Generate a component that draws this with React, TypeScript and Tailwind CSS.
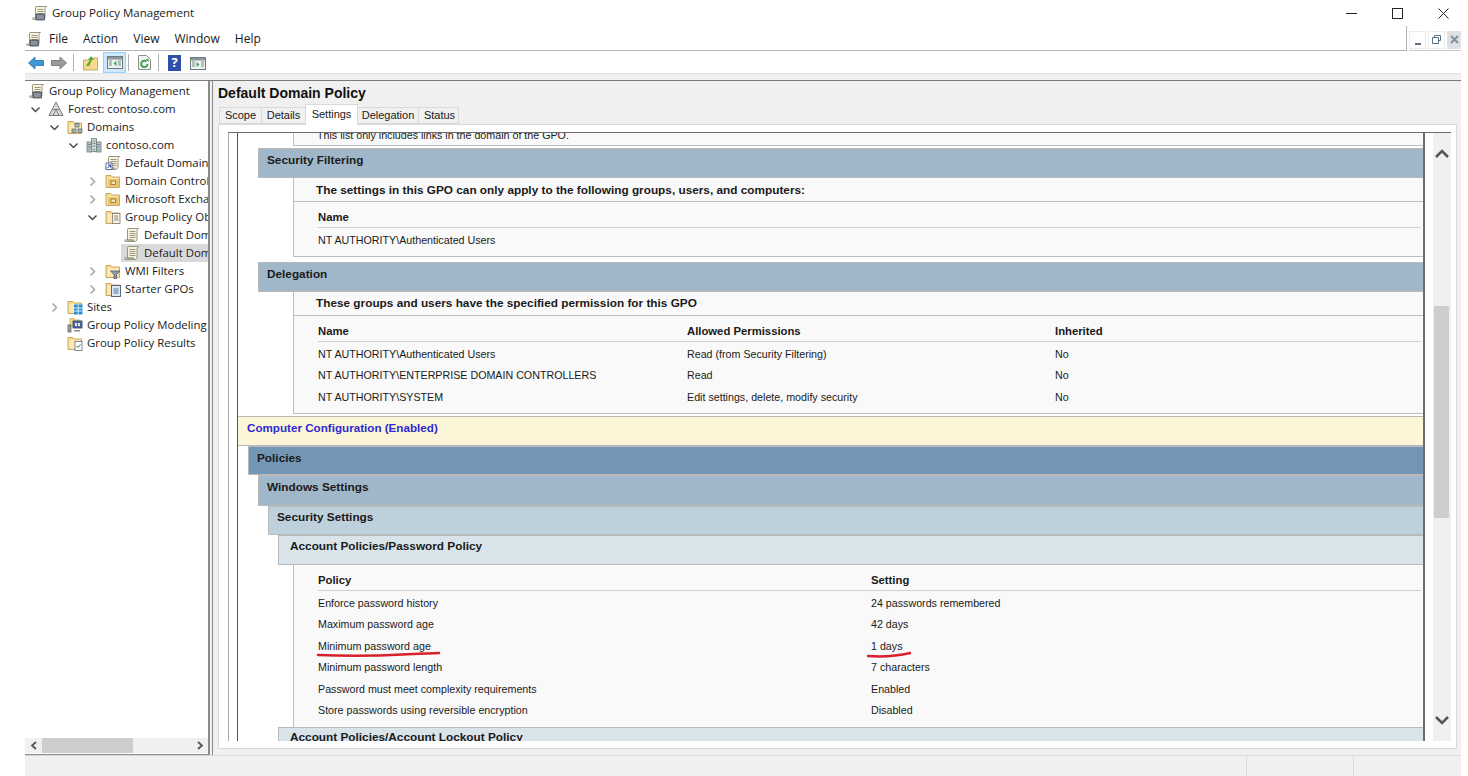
import React from "react";

const ui = "font-['Open_Sans','Noto_Sans',sans-serif]";

function Scroll({ shield, box }: { shield?: boolean; box?: boolean }) {
  return (
    <svg width="16" height="16" viewBox="0 0 16 16" className="shrink-0">
      <path d="M4 1.500h10.500c-.8.5-1.500 1.500-1.500 3V12c0 1.500-1 2.500-2 2.500H2c-.9 0-1.500-.7-1.500-1.500h8c0 .6.400 1 .9 1s.6-.4.6-1H3.500V3c0-.8.200-1.500.5-1.500z" fill="#f7f3de" stroke="#8d8a76" strokeWidth="0.9" />
      <path d="M5.500 4.500h6M5.500 6.500h6M5.500 8.500h6M5.500 10.500h6" stroke="#8d8a76" strokeWidth="0.9" />
      {shield && (
        <>
          <path d="M1 8h6v6.500H1z" fill="#fff" stroke="#4a5a8c" strokeWidth="0.9" />
          <path d="M2.500 13l3-3M3 10h2.500v2.500" fill="none" stroke="#2a3f9c" strokeWidth="1" />
        </>
      )}
      {box && (
        <>
          <path d="M4 9h8.500v6H4z" fill="#6f7683" stroke="#4a505c" strokeWidth="0.8" />
          <path d="M5 11h6.500M5 13h6.500" stroke="#b9bec6" strokeWidth="0.8" />
        </>
      )}
    </svg>
  );
}

function Folder({ kind }: { kind?: "doc" | "ou" | "filter" | "starter" | "sites" | "domains" | "results" }) {
  return (
    <svg width="16" height="16" viewBox="0 0 16 16" className="shrink-0">
      <path d="M1 2.500h5l1.500 1.500h7V14.500H1z" fill="#f7dc8f" stroke="#c1a25a" strokeWidth="0.9" />
      <path d="M2.500 5h11v8.500h-11z" fill="#fbeab8" />
      {kind === "ou" && (
        <>
          <rect x="3" y="6" width="11" height="8" fill="#e9c66f" />
          <rect x="6" y="8" width="4.500" height="3.500" fill="#f7e7b4" stroke="#8c6d2c" strokeWidth="0.8" />
        </>
      )}
      {kind === "doc" && (
        <>
          <rect x="7.500" y="4.500" width="7.500" height="10" fill="#f8f5e7" stroke="#7d7a68" strokeWidth="0.8" />
          <path d="M9 7h4.500M9 9h4.500M9 11h4.500" stroke="#77756a" strokeWidth="0.8" />
        </>
      )}
      {kind === "filter" && <path d="M5.500 8h9.500l-3.500 3.500V15.500h-2.500v-4z" fill="#8d9aa8" stroke="#4f5965" strokeWidth="0.8" />}
      {kind === "starter" && (
        <>
          <rect x="6.500" y="4.500" width="9" height="11" fill="#dfe7f2" stroke="#4c5a6d" strokeWidth="0.9" />
          <path d="M8.500 8h5M8.500 10h5M8.500 12h5" stroke="#3f6ea8" strokeWidth="0.9" />
        </>
      )}
      {kind === "sites" && (
        <>
          <rect x="7" y="5.500" width="8.500" height="10" fill="#2f8fd0" />
          <path d="M7 9h8.500M7 12h8.500M11.200 5.500v10" stroke="#fff" strokeWidth="0.8" />
        </>
      )}
      {kind === "domains" && (
        <>
          <rect x="8" y="4.500" width="4" height="3.500" fill="#aab3bb" stroke="#59636c" strokeWidth="0.7" />
          <rect x="5" y="10" width="4" height="3.500" fill="#aab3bb" stroke="#59636c" strokeWidth="0.7" />
          <rect x="11" y="10" width="4" height="3.500" fill="#aab3bb" stroke="#59636c" strokeWidth="0.7" />
        </>
      )}
      {kind === "results" && (
        <>
          <rect x="8" y="6.500" width="7" height="9" fill="#fff" stroke="#5f6a78" strokeWidth="0.8" />
          <path d="M9.500 11l1.500 1.500 2.500-3" stroke="#2f7d3a" strokeWidth="1" fill="none" />
        </>
      )}
    </svg>
  );
}

function Forest() {
  return (
    <svg width="16" height="16" viewBox="0 0 16 16" className="shrink-0">
      <path d="M8 1l7 13.500H1z" fill="#d8d8d8" stroke="#6e6e6e" strokeWidth="0.9" />
      <path d="M5 8.500h6M8 8.500l-3 6M8 8.500l3 6" stroke="#6e6e6e" strokeWidth="0.8" fill="none" />
    </svg>
  );
}

function Server() {
  return (
    <svg width="16" height="16" viewBox="0 0 16 16" className="shrink-0">
      <rect x="1" y="5" width="5" height="10" fill="#b8c2c6" stroke="#6d7a7e" strokeWidth="0.8" />
      <rect x="10" y="5" width="5" height="10" fill="#b8c2c6" stroke="#6d7a7e" strokeWidth="0.8" />
      <rect x="5.500" y="1.500" width="5" height="13" fill="#cfd7da" stroke="#6d7a7e" strokeWidth="0.8" />
      <path d="M2 7.500h3M2 10h3M11 7.500h3M11 10h3M6.500 4h3M6.500 6.500h3M6.500 9h3" stroke="#5d6a6e" strokeWidth="0.7" />
      <path d="M2.500 13h1.500M7 12.500h2M11.500 13h1.500" stroke="#35b34a" strokeWidth="1.200" />
    </svg>
  );
}

function Modeling() {
  return (
    <svg width="16" height="16" viewBox="0 0 16 16" className="shrink-0">
      <path d="M3 1.500h4l1 1.500h5V9H3z" fill="#f7dc8f" stroke="#c1a25a" strokeWidth="0.8" />
      <rect x="6" y="4" width="9" height="7" fill="#4d6aa8" stroke="#39435c" strokeWidth="0.8" />
      <path d="M8 6h2v3H8zM11 6h2v3h-2z" fill="#dfe7f2" />
      <rect x="1" y="8" width="3" height="7" fill="#9aa2a8" stroke="#555" strokeWidth="0.7" />
      <path d="M7 13h6v1.500H7z" fill="#8a9096" />
    </svg>
  );
}

function Chev({ open }: { open?: boolean }) {
  return (
    <svg width="11" height="11" viewBox="0 0 11 11" className="shrink-0">
      {open ? (
        <path d="M1.500 3.500l4 4 4-4" fill="none" stroke="#4a4a4a" strokeWidth="1.500" />
      ) : (
        <path d="M3.500 1.500l4 4-4 4" fill="none" stroke="#a6a6a6" strokeWidth="1.500" />
      )}
    </svg>
  );
}

function TreeRow({ pad, chev, icon, label, selected, root }: { pad: string; chev?: "open" | "closed"; icon: React.ReactNode; label: string; selected?: boolean; root?: boolean }) {
  return (
    <div className={`flex h-[18px] items-center whitespace-nowrap ${pad}`}>
      {!root && <span className="flex w-[19px] shrink-0 items-center pl-[1px]">{chev && <Chev open={chev === "open"} />}</span>}
      <span className={`-ml-[3px] flex h-[18px] flex-1 items-center gap-[4px] pl-[3px] ${selected ? "bg-[#d9d9d9]" : ""}`}>
        {icon}
        <span>{label}</span>
      </span>
    </div>
  );
}

function Bar({ indent, bg, box, label }: { indent: string; bg: string; box: string; label: string }) {
  return (
    <div className={`border border-r-0 border-[#b9b9b9] text-[11.800px] font-bold ${indent} ${bg} ${box}`}>
      {label}
    </div>
  );
}

function Underline({ d, cls }: { d: string; cls: string }) {
  return (
    <svg viewBox="0 0 130 8" className={`pointer-events-none absolute top-[12px] h-[8px] ${cls}`} preserveAspectRatio="none">
      <path d={d} fill="none" stroke="#d8202c" strokeWidth="2.400" strokeLinecap="round" vectorEffect="non-scaling-stroke" />
    </svg>
  );
}

function ColHead({ children, cols }: { children: React.ReactNode; cols: string }) {
  return <div className={`grid h-[23px] border-b border-b-[#cfcfcf] pt-[5px] text-[11.300px] font-bold ${cols}`}>{children}</div>;
}

function Row({ cols, cells }: { cols: string; cells: React.ReactNode[] }) {
  return (
    <div className={`grid h-[21.500px] items-center pt-[2px] ${cols}`}>
      {cells.map((c, i) => (
        <div key={i}>{c}</div>
      ))}
    </div>
  );
}

export default function App() {
  const tree = (
    <>
      <TreeRow root pad="pl-[4px]" icon={<Scroll box />} label="Group Policy Management" />
      <TreeRow pad="pl-[4px]" chev="open" icon={<Forest />} label="Forest: contoso.com" />
      <TreeRow pad="pl-[23px]" chev="open" icon={<Folder kind="domains" />} label="Domains" />
      <TreeRow pad="pl-[42px]" chev="open" icon={<Server />} label="contoso.com" />
      <TreeRow pad="pl-[61px]" icon={<Scroll shield />} label="Default Domain Policy" />
      <TreeRow pad="pl-[61px]" chev="closed" icon={<Folder kind="ou" />} label="Domain Controllers" />
      <TreeRow pad="pl-[61px]" chev="closed" icon={<Folder kind="ou" />} label="Microsoft Exchange" />
      <TreeRow pad="pl-[61px]" chev="open" icon={<Folder kind="doc" />} label="Group Policy Objects" />
      <TreeRow pad="pl-[80px]" icon={<Scroll />} label="Default Domain Controllers" />
      <TreeRow pad="pl-[80px]" icon={<Scroll />} label="Default Domain Policy" selected />
      <TreeRow pad="pl-[61px]" chev="closed" icon={<Folder kind="filter" />} label="WMI Filters" />
      <TreeRow pad="pl-[61px]" chev="closed" icon={<Folder kind="starter" />} label="Starter GPOs" />
      <TreeRow pad="pl-[23px]" chev="closed" icon={<Folder kind="sites" />} label="Sites" />
      <TreeRow pad="pl-[23px]" icon={<Modeling />} label="Group Policy Modeling" />
      <TreeRow pad="pl-[23px]" icon={<Folder kind="results" />} label="Group Policy Results" />
    </>
  );

  const c3 = "grid-cols-[369px_368px_1fr]";
  const c2 = "grid-cols-[553px_1fr]";
  const box = "ml-[55px] border-r border-l border-[#bdbdbd] bg-[#f9f9f9]";
  const head = "border-b border-b-[#bdbdbd] pl-[22px] text-[11.800px] font-bold";
  const inner = "mr-[2px] ml-[24px] pt-[3px]";

  return (
    <div className={`flex h-[776px] w-[1468px] overflow-hidden bg-white text-[11.400px] text-[#1a1a1a] ${ui}`}>
      <div className="ml-[25px] flex w-[1436px] flex-col">
        {/* Title bar */}
        <div className="flex h-[26px] items-center">
          <span className="ml-[7px]"><Scroll box /></span>
          <span className="ml-[4px] text-[11.500px]">Group Policy Management</span>
          <div className="ml-auto flex items-center">
            <svg width="11" height="11" viewBox="0 0 11 11"><path d="M0 5.500h11" stroke="#222" /></svg>
            <svg width="11" height="11" viewBox="0 0 11 11" className="ml-[35px]"><rect x="0.500" y="0.500" width="10" height="10" fill="none" stroke="#222" /></svg>
            <svg width="11" height="11" viewBox="0 0 11 11" className="mr-[12px] ml-[35px]"><path d="M0.500 0.500l10 10M10.500 0.500l-10 10" stroke="#222" /></svg>
          </div>
        </div>
        {/* Menu bar */}
        <div className="flex h-[25px] items-stretch">
          <div className="flex flex-1 items-center border-r border-b border-r-[#b4b4b4] border-b-[#b4b4b4] pt-[2px] text-[12px]">
            <span className="ml-[1px]"><Scroll box /></span>
            <span className="ml-[7px]">File</span>
            <span className="ml-[15px]">Action</span>
            <span className="ml-[15px]">View</span>
            <span className="ml-[15px]">Window</span>
            <span className="ml-[15px]">Help</span>
          </div>
          <div className="ml-[2px] flex items-center gap-[2px] border-b border-b-[#c8c8c8] pt-[3px]">
            <span className="flex h-[18px] w-[17px] items-end justify-center border border-[#ececec] pb-[3px]"><span className="h-[2px] w-[6px] bg-[#5f7083]" /></span>
            <span className="flex h-[18px] w-[17px] items-center justify-center border border-[#ececec]">
              <svg width="9" height="9" viewBox="0 0 9 9"><path d="M2.500 2.500V.5h6v5h-2M.5 2.500h6v6h-6z" fill="none" stroke="#5f7083" /></svg>
            </span>
            <span className="flex h-[18px] w-[14px] items-center justify-center bg-[#dfe1e4]">
              <svg width="9" height="9" viewBox="0 0 9 9"><path d="M1 1l7 7M8 1l-7 7" stroke="#7f8ea0" strokeWidth="2" /></svg>
            </span>
          </div>
        </div>
        {/* Toolbar */}
        <div className="flex h-[23px] items-center border-b border-b-[#e3e3e3] pl-[3px]">
          <svg width="16" height="14" viewBox="0 0 16 14" className="mt-[2px]"><path d="M.5 7L7 1v3.500h8.500v5H7V13z" fill="#3f97d9" stroke="#2a6ea5" strokeWidth="0.8" /></svg>
          <svg width="16" height="14" viewBox="0 0 16 14" className="mt-[2px] ml-[7px]"><path d="M15.500 7L9 1v3.500H.5v5H9V13z" fill="#9a9a9a" stroke="#6b6b6b" strokeWidth="0.8" /></svg>
          <span className="ml-[6px] h-[17px] w-px bg-[#b0b0b0]" />
          <svg width="15" height="16" viewBox="0 0 15 16" className="mt-[1px] ml-[9px]">
            <path d="M.5 5h6l1-2h7v12H.5z" fill="#f6d98c" stroke="#b69a55" strokeWidth="0.8" />
            <path d="M3 11l4-6-2 0 3-4 3 4-2 0-3 6z" fill="#5aa83a" />
          </svg>
          <span className="ml-[5px] flex h-[21px] w-[23px] items-center justify-center border border-[#99d1ff] bg-[#cce8ff]">
            <svg width="16" height="13" viewBox="0 0 16 13">
              <rect x="0.500" y="0.500" width="15" height="12" fill="#eef2ee" stroke="#6d7a7e" />
              <path d="M1 1h14v2.500H1z" fill="#8b979b" />
              <path d="M2 5h3M2 7h3M2 9h3M11 5h3M11 7h3M11 9h3" stroke="#7a8a8e" />
              <path d="M9.500 5v5L6.500 7.500z" fill="#33a852" />
            </svg>
          </span>
          <span className="ml-[2px] h-[17px] w-px bg-[#b0b0b0]" />
          <svg width="13" height="15" viewBox="0 0 13 15" className="mt-[1px] ml-[9px]">
            <path d="M.5.5h8l4 4v10H.5z" fill="#f3f3f3" stroke="#8f8f8f" />
            <path d="M9.500 9a3.200 3.200 0 1 1-1-2.400" fill="none" stroke="#2ca04a" strokeWidth="1.800" />
            <path d="M8 4l2.500 0 0 3z" fill="#2ca04a" />
          </svg>
          <span className="ml-[7px] h-[17px] w-px bg-[#b0b0b0]" />
          <span className="mt-[1px] ml-[9px] flex h-[16px] w-[13px] items-center justify-center bg-[#2f4fa8] text-[13px] leading-none font-bold text-white">?</span>
          <svg width="16" height="13" viewBox="0 0 16 13" className="mt-[2px] ml-[9px]">
            <rect x="0.500" y="0.500" width="15" height="12" fill="#eef2ee" stroke="#6d7a7e" />
            <path d="M1 1h14v2.500H1z" fill="#8b979b" />
            <path d="M2 5h3M2 7h3M2 9h3M11 5h3M11 7h3M11 9h3" stroke="#7a8a8e" />
            <path d="M6.500 5v5l3-2.500z" fill="#33a852" />
          </svg>
        </div>
        <div className="h-[6px] bg-[#f0f0f0]" />
        {/* Body */}
        <div className="flex h-[675px] border-t border-t-[#7a7a7a] bg-[#f0f0f0]">
          {/* Tree pane */}
          <div className="flex w-[185px] flex-col border-r-2 border-r-[#8c8c8c] bg-white">
            <div className="h-[1px]" />
            <div className="min-h-0 w-[183px] flex-1 overflow-hidden">{tree}</div>
            <div className="mb-[1px] flex h-[15px] w-[183px] items-center bg-[#f0f0f0]">
              <span className="flex w-[17px] justify-center">
                <svg width="8" height="9" viewBox="0 0 8 9"><path d="M6 1L2 4.500 6 8" fill="none" stroke="#555" strokeWidth="1.800" /></svg>
              </span>
              <span className="h-[15px] w-[91px] bg-[#cdcdcd]" />
              <span className="ml-auto flex w-[17px] justify-center">
                <svg width="8" height="9" viewBox="0 0 8 9"><path d="M2 1l4 3.500L2 8" fill="none" stroke="#555" strokeWidth="1.800" /></svg>
              </span>
            </div>
            <div className="h-[1px] bg-[#8c8c8c]" />
          </div>
          {/* Right pane */}
          <div className="ml-[2px] flex flex-1 flex-col border-l border-l-[#8c8c8c]">
            <div className="flex h-[25px] items-end pb-[4px] pl-[5px] font-['Liberation_Sans',sans-serif] text-[14px] leading-[18px] font-bold text-[#111]">
              Default Domain Policy
            </div>
            {/* Tabs */}
            <div className="flex h-[18px] items-end pl-[6px] font-['Liberation_Sans',sans-serif] text-[11px]">
              <span className="flex h-[17px] w-[42px] items-center justify-center border border-r-0 border-[#d9d9d9] bg-[#f0f0f0]">Scope</span>
              <span className="flex h-[17px] w-[44px] items-center justify-center border border-r-0 border-[#d9d9d9] bg-[#f0f0f0]">Details</span>
              <span className="z-10 -mb-[1px] flex h-[21px] w-[53px] items-center justify-center border border-b-0 border-[#d9d9d9] bg-white pb-[2px]">Settings</span>
              <span className="flex h-[17px] w-[60px] items-center justify-center border border-x-0 border-[#d9d9d9] bg-[#f0f0f0]">Delegation</span>
              <span className="flex h-[17px] w-[41px] items-center justify-center border border-[#d9d9d9] bg-[#f0f0f0] pl-[2px]">Status</span>
            </div>
            {/* Tab page */}
            <div className="ml-[5px] flex h-[625px] w-[1239px] flex-col border border-[#d9d9d9] bg-white pt-[7px] pl-[9px]">
              <div className="flex h-[609px] w-[1223px] flex-col border-t border-t-[#6d6d6d]">
                <div className="flex min-h-0 flex-1">
                  {/* Report */}
                  <div className="w-[1197px] shrink-0 overflow-hidden border-r-2 border-l border-r-[#6d6d6d] border-l-[#a8a8a8] pl-[8px]">
                    <div className="h-full overflow-hidden border-l border-l-[#555] font-['Liberation_Sans',sans-serif] text-[10.700px] leading-[14px] text-[#1a1a1a]">
                      <div className="-mt-[9px] w-[1186px]">
                        <div className={`${box} flex h-[22px] items-end border-b border-b-[#bdbdbd] pb-[3px] pl-[23px]`}>This list only includes links in the domain of the GPO.</div>
                        <div className="h-[2px]" />
                        <Bar indent="ml-[20px]" bg="bg-[#a0b7ca]" box="h-[30px] pt-[4px] pl-[8px]" label="Security Filtering" />
                        <div className={`${box} h-[79px] border-b`}>
                          <div className={`${head} h-[24px] pt-[5px]`}>The settings in this GPO can only apply to the following groups, users, and computers:</div>
                          <div className={inner}>
                            <ColHead cols="grid-cols-1"><div>Name</div></ColHead>
                            <Row cols="grid-cols-1" cells={["NT AUTHORITY\\Authenticated Users"]} />
                          </div>
                        </div>
                        <div className="h-[5px]" />
                        <Bar indent="ml-[20px]" bg="bg-[#a0b7ca]" box="h-[30px] pt-[4px] pl-[8px]" label="Delegation" />
                        <div className={`${box} h-[122px] border-b`}>
                          <div className={`${head} h-[24px] pt-[4px]`}>These groups and users have the specified permission for this GPO</div>
                          <div className={inner}>
                            <ColHead cols={c3}><div>Name</div><div>Allowed Permissions</div><div>Inherited</div></ColHead>
                            <Row cols={c3} cells={["NT AUTHORITY\\Authenticated Users", "Read (from Security Filtering)", "No"]} />
                            <Row cols={c3} cells={["NT AUTHORITY\\ENTERPRISE DOMAIN CONTROLLERS", "Read", "No"]} />
                            <Row cols={c3} cells={["NT AUTHORITY\\SYSTEM", "Edit settings, delete, modify security", "No"]} />
                          </div>
                        </div>
                        <div className="h-[2px]" />
                        <div className="h-[30px] border-y border-[#b9b9b9] bg-[#fdf5d8] pt-[4px] pl-[9px] text-[11.650px] font-bold text-[#2a2ad0]">Computer Configuration (Enabled)</div>
                        <Bar indent="ml-[10px]" bg="bg-[#7296b4]" box="h-[29px] pt-[4px] pl-[8px]" label="Policies" />
                        <Bar indent="ml-[20px]" bg="bg-[#a0b7ca]" box="h-[31px] pt-[4px] pl-[8px]" label="Windows Settings" />
                        <Bar indent="ml-[30px]" bg="bg-[#bfd0dd]" box="h-[29px] pt-[3px] pl-[8px]" label="Security Settings" />
                        <Bar indent="ml-[40px]" bg="bg-[#d9e3ea]" box="h-[30px] pt-[3px] pl-[11px]" label="Account Policies/Password Policy" />
                        <div className={`${box} h-[162px]`}>
                          <div className={inner}>
                            <ColHead cols={c2}><div>Policy</div><div>Setting</div></ColHead>
                            <Row cols={c2} cells={["Enforce password history", "24 passwords remembered"]} />
                            <Row cols={c2} cells={["Maximum password age", "42 days"]} />
                            <Row
                              cols={c2}
                              cells={[
                                <span className="relative inline-block">Minimum password age<Underline cls="-left-[2px] w-[125px]" d="M2 4C30 5 60 5 90 3.500 108 2.500 122 2.500 128 2" /></span>,
                                <span className="relative inline-block">1 days<Underline cls="-left-[4px] w-[44px]" d="M2 5C40 6 90 5 128 2" /></span>,
                              ]}
                            />
                            <Row cols={c2} cells={["Minimum password length", "7 characters"]} />
                            <Row cols={c2} cells={["Password must meet complexity requirements", "Enabled"]} />
                            <Row cols={c2} cells={["Store passwords using reversible encryption", "Disabled"]} />
                          </div>
                        </div>
                        <div className="ml-[40px] h-[30px] border border-r-0 border-[#b9b9b9] bg-[#d9e3ea] pt-[2px] pl-[11px] text-[11.800px] font-bold">Account Policies/Account Lockout Policy</div>
                      </div>
                    </div>
                  </div>
                  {/* Gutter and scrollbar */}
                  <div className="w-[8px] shrink-0 bg-white" />
                  <div className="relative flex w-[18px] shrink-0 flex-col justify-between bg-[#f0f0f0] py-[15px]">
                    <svg width="18" height="12" viewBox="0 0 18 12"><path d="M3 9l6-6 6 6" fill="none" stroke="#555" strokeWidth="2.500" /></svg>
                    <div className="absolute top-[173px] left-[1px] h-[212px] w-[15px] bg-[#cdcdcd]" />
                    <svg width="18" height="12" viewBox="0 0 18 12"><path d="M3 3l6 6 6-6" fill="none" stroke="#555" strokeWidth="2.500" /></svg>
                  </div>
                </div>
              </div>
            </div>
          </div>
        </div>
        {/* Status bar */}
        <div className="flex flex-1 border-t border-t-[#d9d9d9] bg-[#f0f0f0]">
          <div className="ml-auto h-full w-[107px] border-l border-l-[#d9d9d9]" />
          <div className="h-full w-[108px] border-l border-l-[#d9d9d9]" />
        </div>
      </div>
    </div>
  );
}
